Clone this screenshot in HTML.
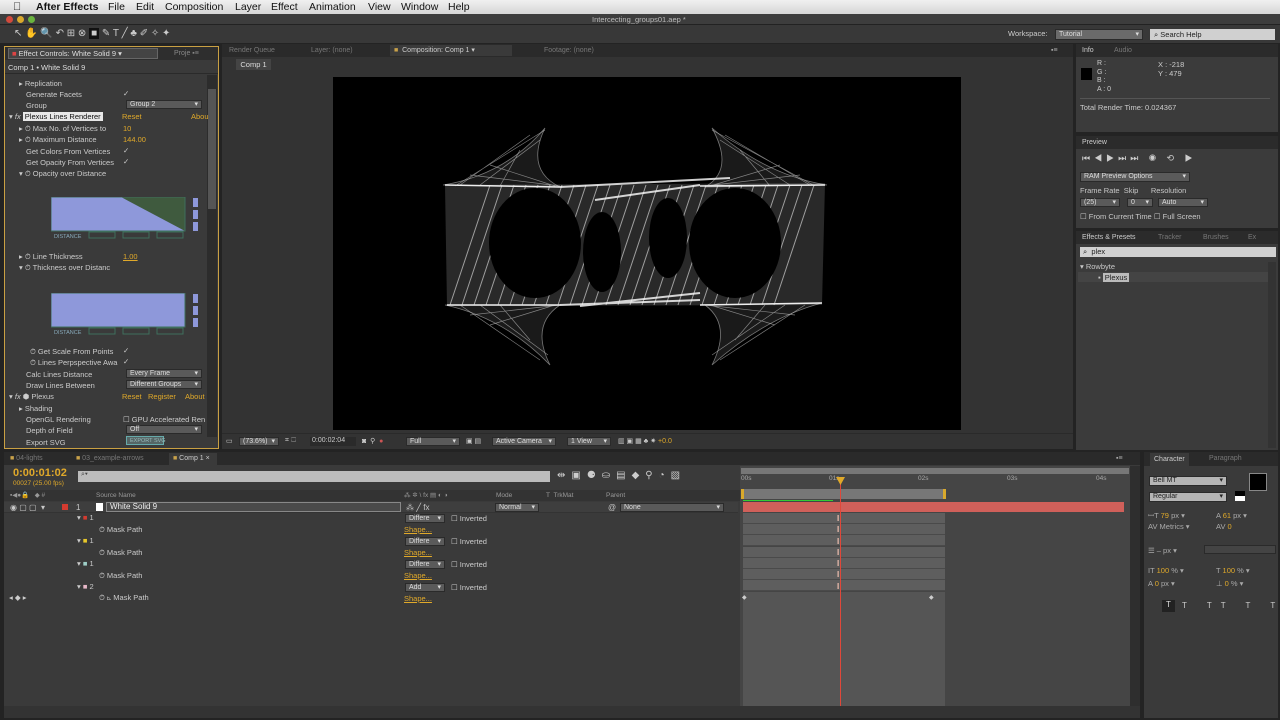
<!DOCTYPE html>
<html><head><meta charset="utf-8">
<style>
*{margin:0;padding:0;box-sizing:border-box}
body{width:1280px;height:720px;overflow:hidden;background:#232323;font-family:"Liberation Sans",sans-serif;font-size:8px;color:#c8c8c8;position:relative}
.a{position:absolute;white-space:nowrap}
.p{position:absolute;background:#3b3b3b}
.y{color:#e0a92a}
.dd{position:absolute;background:#5a5a5a;border:1px solid #2a2a2a;color:#ddd;height:9px;font-size:7px;line-height:8px;padding-left:3px}
.dd:after{content:"▾";position:absolute;right:3px;top:0;font-size:7px}
.row{position:absolute;left:4px;width:734px;height:11px;border-bottom:1px solid #333}
.trow{position:absolute;left:743px;width:202px;height:11px;background:#5e5e5e;border-bottom:1px solid #4a4a4a}
</style></head><body>
<div class="a" style="left:0;top:0;width:1280px;height:14px;background:linear-gradient(#f0f0f0,#d6d6d6);color:#111;font-size:10.5px;line-height:14px">
<span class="a" style="left:13px;font-size:11px">&#63743;</span>
<b class="a" style="left:36px">After Effects</b>
<span class="a" style="left:108px">File</span><span class="a" style="left:136px">Edit</span><span class="a" style="left:165px">Composition</span><span class="a" style="left:235px">Layer</span><span class="a" style="left:271px">Effect</span><span class="a" style="left:309px">Animation</span><span class="a" style="left:368px">View</span><span class="a" style="left:401px">Window</span><span class="a" style="left:448px">Help</span>
</div>
<div class="a" style="left:0;top:14px;width:1280px;height:11px;background:#3d3d3d;border-bottom:1px solid #222">
<span class="a" style="left:6px;top:2px;width:7px;height:7px;border-radius:50%;background:#d24a3c"></span>
<span class="a" style="left:17px;top:2px;width:7px;height:7px;border-radius:50%;background:#d9a92c"></span>
<span class="a" style="left:28px;top:2px;width:7px;height:7px;border-radius:50%;background:#6ab43e"></span>
<span class="a" style="left:592px;top:1px;font-size:7.5px;color:#bbb">Intercecting_groups01.aep *</span>
</div>
<div class="a" style="left:0;top:25px;width:1280px;height:18px;background:#383838;color:#ccc;font-size:10px;line-height:18px">
<span class="a" style="left:14px">↖ ✋ 🔍 ↶ ⊞ ⊗ <span style="background:#111;padding:0 2px">■</span> ✎ T ╱ ♣ ✐ ✧ ✦</span>
<div class="dd" style="left:1055px;top:4px;width:88px;height:11px;background:#6a6a6a;line-height:10px">Tutorial</div>
<span class="a" style="left:1008px;font-size:7.5px">Workspace:</span>
<div class="a" style="left:1150px;top:4px;width:125px;height:11px;background:#d0d0d0;color:#222;font-size:7.5px;line-height:11px;padding-left:4px">⌕ Search Help</div>
</div>
<div class="p" style="left:4px;top:46px;width:215px;height:403px;border:1px solid #c9a043;background:#3a3a3a"></div>
<div class="a" style="left:5px;top:47px;width:213px;height:13px;background:#2e2e2e"></div>
<div class="a" style="left:8px;top:48px;width:150px;height:11px;background:#444;border:1px solid #666;font-size:7.5px;color:#ddd;line-height:10px;padding-left:3px"><span style="color:#d44">■</span> Effect Controls: White Solid 9 ▾</div>
<span class="a" style="left:174px;top:50px;font-size:7px;color:#888">Proje ▪≡</span>
<div class="a" style="left:5px;top:61px;width:213px;height:13px;font-size:7.5px;color:#ddd;padding:2px 3px;border-bottom:1px solid #2a2a2a">Comp 1 • White Solid 9</div>
<div class="a" style="left:207px;top:75px;width:10px;height:362px;background:#2c2c2c"></div>
<div class="a" style="left:208px;top:89px;width:8px;height:120px;background:#555"></div>
<div class="a" style="left:5px;top:75px;width:202px;height:372px;font-size:7.5px;color:#ccc">
<span class="a" style="left:14px;top:4px">▸ Replication</span>
<span class="a" style="left:21px;top:15px">Generate Facets</span><span class="a" style="left:118px;top:14px">✓</span>
<span class="a" style="left:21px;top:26px">Group</span><div class="dd" style="left:121px;top:25px;width:76px">Group 2</div>
<span class="a" style="left:4px;top:37px">▾ <i>fx</i> <span style="background:#e8e8e8;color:#111;padding:0 2px">Plexus Lines Renderer</span></span>
<span class="a y" style="left:117px;top:37px">Reset</span><span class="a y" style="left:186px;top:37px">Abou</span>
<span class="a" style="left:14px;top:49px">▸ ⏱ Max No. of Vertices to</span><span class="a y" style="left:118px;top:49px">10</span>
<span class="a" style="left:14px;top:60px">▸ ⏱ Maximum Distance</span><span class="a y" style="left:118px;top:60px">144.00</span>
<span class="a" style="left:21px;top:72px">Get Colors From Vertices</span><span class="a" style="left:118px;top:71px">✓</span>
<span class="a" style="left:21px;top:83px">Get Opacity From Vertices</span><span class="a" style="left:118px;top:82px">✓</span>
<span class="a" style="left:14px;top:94px">▾ ⏱ Opacity over Distance</span>
<svg class="a" style="left:46px;top:122px" width="150" height="42"><rect x="0" y="0" width="134" height="34" fill="#8e98da"/><polygon points="70,0 134,0 134,34" fill="#3f5a3e"/><rect x="0" y="0" width="134" height="34" fill="none" stroke="#3f6f5c"/><rect x="142" y="1" width="5" height="9" fill="#8e98da"/><rect x="142" y="13" width="5" height="9" fill="#8e98da"/><rect x="142" y="25" width="5" height="9" fill="#8e98da"/><text x="3" y="41" font-size="5.5" fill="#8ab">DISTANCE</text><rect x="38" y="35" width="26" height="6" fill="none" stroke="#3f6f5c"/><rect x="72" y="35" width="26" height="6" fill="none" stroke="#3f6f5c"/><rect x="106" y="35" width="26" height="6" fill="none" stroke="#3f6f5c"/></svg>
<span class="a" style="left:14px;top:177px">▸ ⏱ Line Thickness</span><span class="a y" style="left:118px;top:177px;text-decoration:underline">1.00</span>
<span class="a" style="left:14px;top:188px">▾ ⏱ Thickness over Distanc</span>
<svg class="a" style="left:46px;top:218px" width="150" height="42"><rect x="0" y="0" width="134" height="34" fill="#8e98da" stroke="#3f6f5c"/><rect x="142" y="1" width="5" height="9" fill="#8e98da"/><rect x="142" y="13" width="5" height="9" fill="#8e98da"/><rect x="142" y="25" width="5" height="9" fill="#8e98da"/><text x="3" y="41" font-size="5.5" fill="#8ab">DISTANCE</text><rect x="38" y="35" width="26" height="6" fill="none" stroke="#3f6f5c"/><rect x="72" y="35" width="26" height="6" fill="none" stroke="#3f6f5c"/><rect x="106" y="35" width="26" height="6" fill="none" stroke="#3f6f5c"/></svg>
<span class="a" style="left:25px;top:272px">⏱ Get Scale From Points</span><span class="a" style="left:118px;top:271px">✓</span>
<span class="a" style="left:25px;top:283px">⏱ Lines Perpspective Awa</span><span class="a" style="left:118px;top:282px">✓</span>
<span class="a" style="left:21px;top:295px">Calc Lines Distance</span><div class="dd" style="left:121px;top:294px;width:76px">Every Frame</div>
<span class="a" style="left:21px;top:306px">Draw Lines Between</span><div class="dd" style="left:121px;top:305px;width:76px">Different Groups</div>
<span class="a" style="left:4px;top:317px">▾ <i>fx</i> ⬢ Plexus</span>
<span class="a y" style="left:117px;top:317px">Reset</span><span class="a y" style="left:143px;top:317px">Register</span><span class="a y" style="left:180px;top:317px">About</span>
<span class="a" style="left:14px;top:329px">▸ Shading</span>
<span class="a" style="left:21px;top:340px">OpenGL Rendering</span><span class="a" style="left:118px;top:340px">☐ GPU Accelerated Ren</span>
<span class="a" style="left:21px;top:351px">Depth of Field</span><div class="dd" style="left:121px;top:350px;width:76px">Off</div>
<span class="a" style="left:21px;top:363px">Export SVG</span><div class="a" style="left:121px;top:361px;width:38px;height:9px;background:#566;border:1px solid #6aa;font-size:5.5px;color:#9bb;padding:1px 3px">EXPORT SVG</div>
</div>
<div class="p" style="left:222px;top:44px;width:851px;height:405px;background:#333"></div>
<div class="a" style="left:222px;top:44px;width:851px;height:13px;background:#2a2a2a;font-size:7px;color:#777;line-height:13px">
<span class="a" style="left:7px">Render Queue</span><span class="a" style="left:89px">Layer: (none)</span>
<span class="a" style="left:168px;top:1px;height:11px;width:122px;background:#3a3a3a;color:#ccc;line-height:11px;padding-left:4px"><span style="color:#c9a24a">■</span> &nbsp;Composition: Comp 1 ▾</span>
<span class="a" style="left:322px">Footage: (none)</span><span class="a" style="left:829px;color:#aaa">▪≡</span></div>
<div class="a" style="left:236px;top:59px;width:35px;height:11px;background:#444;font-size:7.5px;color:#ddd;line-height:11px;text-align:center">Comp 1</div>
<svg class="a" style="left:333px;top:77px" width="628" height="353" viewBox="333 77 628 353">
<rect x="333" y="77" width="628" height="353" fill="#000"/>
<g fill="#fff" fill-opacity="0.1" stroke="#ddd" stroke-opacity="0.5" stroke-width="0.8">
<path d="M443 185 Q505 175 545 128 Q525 170 560 187 Z"/>
<path d="M827 185 Q765 175 712 128 Q735 170 705 187 Z"/>
<path d="M445 305 Q505 318 550 365 Q530 325 560 305 Z"/>
<path d="M822 303 Q765 318 712 365 Q732 325 705 305 Z"/>
</g>
<g stroke="#ccc" stroke-width="0.7" stroke-opacity="0.6" fill="none">
<path d="M460 185 L530 135 M480 185 L540 140 M500 186 L520 150 M455 186 L545 130 M470 175 L560 186 M490 165 L555 186"/>
<path d="M810 185 L725 135 M790 185 L720 140 M770 186 L740 150 M815 186 L712 130 M800 175 L705 186 M780 165 L710 186"/>
<path d="M460 305 L540 360 M480 305 L548 355 M500 305 L530 340 M470 315 L560 305 M490 325 L555 305"/>
<path d="M805 305 L720 360 M785 305 L712 355 M765 305 L735 340 M795 315 L705 305 M775 325 L710 305"/>
</g>
<polygon points="445,185 825,183 822,305 447,306" fill="#fff" fill-opacity="0.16"/>
<g stroke="#fff" stroke-width="1" stroke-opacity="0.55">
<path d="M450 305 L490 185 M462 305 L502 185 M474 305 L514 185 M486 305 L526 185 M498 305 L538 185 M510 305 L550 185 M522 305 L562 185 M534 305 L574 185 M546 305 L586 185 M558 305 L598 185 M570 305 L610 185 M582 305 L622 185 M594 305 L634 185 M606 305 L646 185 M618 305 L658 185 M630 305 L670 185 M642 305 L682 185 M654 305 L694 185 M666 305 L706 185 M678 305 L718 185 M690 305 L730 185 M702 305 L742 185 M714 305 L754 185 M726 305 L766 185 M738 305 L778 185 M750 305 L790 185 M762 305 L802 185 M774 305 L814 185"/>
</g>
<ellipse cx="535" cy="243" rx="46" ry="55" fill="#000"/>
<ellipse cx="735" cy="243" rx="46" ry="55" fill="#000"/>
<ellipse cx="602" cy="252" rx="19" ry="40" fill="#000"/>
<ellipse cx="668" cy="238" rx="19" ry="40" fill="#000"/>
<path d="M560 187 L730 178 M595 200 L700 185 M580 306 L700 293 M560 305 L700 300" stroke="#fff" stroke-width="2" opacity=".8"/>
<path d="M445 185 L560 187 M447 305 L560 305 M700 186 L825 185 M700 305 L822 303" stroke="#eee" stroke-width="1.5"/>
</svg>
<div class="a" style="left:222px;top:433px;width:851px;height:15px;background:#333;border-top:1px solid #2a2a2a;font-size:7px;color:#ccc">
<span class="a" style="left:4px;top:3px">▭</span>
<div class="dd" style="left:17px;top:3px;width:40px">(73.6%)</div>
<span class="a" style="left:63px;top:3px">⌗ ⬚</span>
<div class="a" style="left:88px;top:3px;width:46px;height:9px;background:#2a2a2a;font-size:7px;padding-left:2px">0:00:02:04</div>
<span class="a" style="left:140px;top:3px">◙ &nbsp;⚲ &nbsp;<span style="color:#c55">●</span></span>
<div class="dd" style="left:184px;top:3px;width:54px">Full</div>
<span class="a" style="left:244px;top:3px">▣ ▤</span>
<div class="dd" style="left:270px;top:3px;width:64px">Active Camera</div>
<div class="dd" style="left:345px;top:3px;width:44px">1 View</div>
<span class="a" style="left:396px;top:3px">▥ ▣ ▦ ♣ ✷ <span class="y">+0.0</span></span>
</div>
<div class="p" style="left:1076px;top:44px;width:202px;height:88px"></div>
<div class="a" style="left:1076px;top:44px;width:202px;height:13px;background:#2b2b2b;font-size:7px;line-height:13px"><span class="a" style="left:6px;color:#ccc">Info</span><span class="a" style="left:38px;color:#777">Audio</span></div>
<div class="a" style="left:1081px;top:68px;width:11px;height:12px;background:#000"></div>
<div class="a" style="left:1097px;top:60px;font-size:7px;line-height:8.5px;color:#ccc">R :<br>G :<br>B :<br>A : 0</div>
<div class="a" style="left:1158px;top:60px;font-size:7.5px;line-height:9px;color:#ccc">X : -218<br>Y : 479</div>
<div class="a" style="left:1080px;top:98px;width:190px;height:1px;background:#555"></div>
<div class="a" style="left:1080px;top:103px;font-size:7.5px;color:#ccc">Total Render Time: 0.024367</div>
<div class="p" style="left:1076px;top:136px;width:202px;height:92px"></div>
<div class="a" style="left:1076px;top:136px;width:202px;height:13px;background:#2b2b2b;font-size:7px;line-height:13px"><span class="a" style="left:6px;color:#ccc">Preview</span></div>
<div class="a" style="left:1082px;top:153px;font-size:9px;color:#ccc;letter-spacing:4px">⏮◀▶⏭⏭ ◉ ⟲ ▶</div>
<div class="dd" style="left:1080px;top:172px;width:110px;height:10px">RAM Preview Options</div>
<div class="a" style="left:1080px;top:186px;font-size:7.5px">Frame Rate &nbsp;Skip &nbsp;&nbsp;&nbsp;&nbsp;&nbsp;Resolution</div>
<div class="dd" style="left:1080px;top:198px;width:40px">(25)</div>
<div class="dd" style="left:1127px;top:198px;width:26px">0</div>
<div class="dd" style="left:1158px;top:198px;width:50px">Auto</div>
<div class="a" style="left:1080px;top:212px;font-size:7.5px">☐ From Current Time ☐ Full Screen</div>
<div class="p" style="left:1076px;top:231px;width:202px;height:219px"></div>
<div class="a" style="left:1076px;top:231px;width:202px;height:13px;background:#2b2b2b;font-size:7px;line-height:13px"><span class="a" style="left:6px;color:#ccc">Effects &amp; Presets</span><span class="a" style="left:82px;color:#777">Tracker</span><span class="a" style="left:127px;color:#777">Brushes</span><span class="a" style="left:172px;color:#777">Ex</span></div>
<div class="a" style="left:1080px;top:247px;width:196px;height:10px;background:#d0d0d0;color:#222;font-size:7.5px;line-height:10px;padding-left:3px">⌕ &nbsp;plex</div>
<div class="a" style="left:1080px;top:262px;font-size:7.5px">▾ Rowbyte</div>
<div class="a" style="left:1078px;top:272px;width:190px;height:10px;background:#444"></div>
<div class="a" style="left:1098px;top:273px;font-size:7.5px">▪ <span style="background:#bbb;color:#222;padding:0 2px">Plexus</span></div>
<div class="a" style="left:1268px;top:262px;width:8px;height:186px;background:#333"></div>
<div class="p" style="left:4px;top:452px;width:1136px;height:266px;background:#3a3a3a"></div>
<div class="a" style="left:4px;top:452px;width:1136px;height:13px;background:#2a2a2a;font-size:7px;line-height:13px;color:#777">
<span class="a" style="left:6px"><span style="color:#c9a24a">■</span> 04-lights</span><span class="a" style="left:72px"><span style="color:#c9a24a">■</span> 03_example-arrows</span>
<span class="a" style="left:165px;top:1px;height:12px;width:48px;background:#3a3a3a;color:#ccc;line-height:12px;padding-left:4px"><span style="color:#c9a24a">■</span> Comp 1 ×</span><span class="a" style="left:1112px;color:#aaa">▪≡</span></div>
<div class="a" style="left:13px;top:467px;font-size:11px;font-weight:bold;color:#e0a92a">0:00:01:02</div>
<div class="a" style="left:13px;top:480px;font-size:6.5px;color:#e0a92a">00027 (25.00 fps)</div>
<div class="a" style="left:78px;top:471px;width:472px;height:11px;background:#bcbcbc;color:#444;font-size:7px;padding-left:3px">⌕▾</div>
<div class="a" style="left:557px;top:470px;font-size:10px;color:#ccc;letter-spacing:6px">⇹▣⚈⛀▤◆⚲◔▧</div>
<div class="a" style="left:4px;top:490px;width:736px;height:11px;background:#333;font-size:6.5px;color:#999;line-height:11px">
<span class="a" style="left:6px">▪◀●🔒 &nbsp;&nbsp;◆ #</span><span class="a" style="left:92px">Source Name</span><span class="a" style="left:400px">⁂ ✲ \ fx ▤ ◐ ◑</span><span class="a" style="left:492px">Mode</span><span class="a" style="left:542px">T &nbsp;TrkMat</span><span class="a" style="left:602px">Parent</span></div>
<div class="row" style="top:502px;background:#3e3e3e">
<span class="a" style="left:6px;top:1px">◉ ▢ ▢ &nbsp;▾</span><span class="a" style="left:58px;top:2px;width:6px;height:6px;background:#d43b30"></span><span class="a" style="left:72px;top:1px">1</span>
<span class="a" style="left:92px;top:1px;width:7px;height:8px;background:#fff"></span>
<div class="a" style="left:102px;top:0;width:295px;height:10px;border:1px solid #888;background:#4a4a4a;color:#eee;padding-left:3px;line-height:8px">White Solid 9</div>
<span class="a" style="left:402px;top:1px">⁂ ╱ fx</span><div class="dd" style="left:491px;top:1px;width:44px">Normal</div><span class="a" style="left:604px;top:1px">@</span><div class="dd" style="left:616px;top:1px;width:104px">None</div></div>
<div class="a" style="left:4px;top:512px;width:736px;font-size:7.5px;color:#ccc">
<span class="a" style="left:73px;top:1px">▾ <span style="color:#d43b30">■</span> 1</span><span class="a" style="left:95px;top:13px">⏱ Mask Path</span>
<span class="a" style="left:73px;top:24px">▾ <span style="color:#e8c82a">■</span> 1</span><span class="a" style="left:95px;top:36px">⏱ Mask Path</span>
<span class="a" style="left:73px;top:47px">▾ <span style="color:#9fcfc8">■</span> 1</span><span class="a" style="left:95px;top:59px">⏱ Mask Path</span>
<span class="a" style="left:73px;top:70px">▾ <span style="color:#e8b8c8">■</span> 2</span><span class="a" style="left:95px;top:81px">⏱ ⊾ Mask Path</span>
<span class="a" style="left:5px;top:81px">◂ ◆ ▸</span>
<div class="dd" style="left:401px;top:2px;width:40px">Differe</div><span class="a" style="left:447px;top:2px">☐ Inverted</span><span class="a y" style="left:400px;top:13px;text-decoration:underline">Shape...</span>
<div class="dd" style="left:401px;top:25px;width:40px">Differe</div><span class="a" style="left:447px;top:25px">☐ Inverted</span><span class="a y" style="left:400px;top:36px;text-decoration:underline">Shape...</span>
<div class="dd" style="left:401px;top:48px;width:40px">Differe</div><span class="a" style="left:447px;top:48px">☐ Inverted</span><span class="a y" style="left:400px;top:59px;text-decoration:underline">Shape...</span>
<div class="dd" style="left:401px;top:71px;width:40px">Add</div><span class="a" style="left:447px;top:71px">☐ Inverted</span><span class="a y" style="left:400px;top:82px;text-decoration:underline">Shape...</span>
</div>
<div class="a" style="left:740px;top:466px;width:390px;height:240px;background:#454545"></div>
<div class="a" style="left:741px;top:468px;width:388px;height:6px;background:#777"></div>
<div class="a" style="left:741px;top:475px;width:388px;height:14px;font-size:6.5px;color:#aaa"><span class="a" style="left:0">00s</span><span class="a" style="left:88px">01s</span><span class="a" style="left:177px">02s</span><span class="a" style="left:266px">03s</span><span class="a" style="left:355px">04s</span></div>
<div class="a" style="left:741px;top:489px;width:205px;height:10px;background:#777;border-left:3px solid #d9a92c;border-right:3px solid #d9a92c"></div>
<div class="a" style="left:743px;top:500px;width:90px;height:1px;background:#3c3"></div>
<div class="a" style="left:743px;top:502px;width:381px;height:10px;background:#d0605a"></div>
<div class="trow" style="top:513px"></div><div class="trow" style="top:524px"></div><div class="trow" style="top:535px"></div><div class="trow" style="top:547px"></div><div class="trow" style="top:558px"></div><div class="trow" style="top:569px"></div><div class="trow" style="top:580px"></div>
<div class="a" style="left:743px;top:592px;width:202px;height:114px;background:#555"></div>
<div class="a" style="left:742px;top:594px;font-size:6px;color:#ccc">◆</div><div class="a" style="left:929px;top:594px;font-size:6px;color:#ccc">◆</div>
<div class="a" style="left:840px;top:478px;width:1px;height:228px;background:#e0483a"></div>
<div class="a" style="left:836px;top:477px;width:9px;height:8px;background:#e0a92a;clip-path:polygon(0 0,100% 0,50% 100%)"></div>
<div class="a" style="left:837px;top:513px;font-size:8px;font-weight:bold;color:#f0c0b0;line-height:11.3px">I<br>I<br>I<br>I<br>I<br>I<br>I</div>
<div class="a" style="left:1130px;top:466px;width:10px;height:240px;background:#2e2e2e"></div>
<div class="a" style="left:4px;top:706px;width:1136px;height:12px;background:#333"></div>
<div class="p" style="left:1144px;top:452px;width:134px;height:266px;background:#3a3a3a"></div>
<div class="a" style="left:1144px;top:452px;width:134px;height:14px;background:#2a2a2a;font-size:7px;line-height:14px"><span class="a" style="left:6px;top:1px;height:13px;background:#3a3a3a;padding:0 4px;color:#ccc">Character</span><span class="a" style="left:65px;color:#777">Paragraph</span></div>
<div class="dd" style="left:1149px;top:476px;width:78px;height:10px;background:#b5b5b5;color:#222">Bell MT</div>
<div class="dd" style="left:1149px;top:492px;width:78px;height:10px;background:#b5b5b5;color:#222">Regular</div>
<div class="a" style="left:1249px;top:473px;width:18px;height:18px;background:#000;border:1px solid #888"></div>
<div class="a" style="left:1235px;top:491px;width:10px;height:10px;background:#fff;border-top:5px solid #000"></div>
<div class="a" style="left:1148px;top:510px;font-size:7.5px;line-height:11px;color:#aaa">
<span class="a" style="left:0">ꟷT <span class="y">79</span> px ▾</span><span class="a" style="left:68px">A <span class="y">61</span> px ▾</span><br>
<span class="a" style="left:0;top:11px">AV Metrics ▾</span><span class="a" style="left:68px;top:11px">AV <span class="y">0</span></span>
<span class="a" style="left:0;top:35px">☰ – px ▾</span><div class="a" style="left:56px;top:35px;width:72px;height:9px;background:#444;border:1px solid #2a2a2a"></div>
<span class="a" style="left:0;top:55px">IT <span class="y">100</span> % ▾</span><span class="a" style="left:68px;top:55px">T <span class="y">100</span> % ▾</span>
<span class="a" style="left:0;top:68px">A <span class="y">0</span> px ▾</span><span class="a" style="left:68px;top:68px">⊥ <span class="y">0</span> % ▾</span>
</div>
<div class="a" style="left:1162px;top:600px;width:13px;height:12px;background:#222;font-size:8px;color:#ddd;text-align:center">T</div>
<div class="a" style="left:1182px;top:601px;font-size:8px;color:#ccc;letter-spacing:9px">T TT T T T</div>
</body></html>
